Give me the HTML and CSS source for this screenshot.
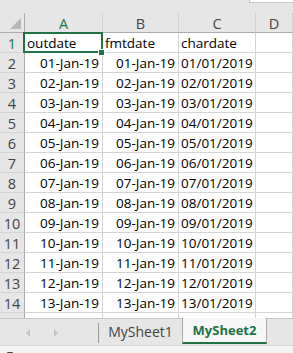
FILE: index.html
```html
<!DOCTYPE html>
<html>
<head>
  <meta charset="UTF-8">
  <title>MySheet2</title>
  <link rel="stylesheet" href="styles.css">
</head>
<body>
  <div class="topband"><div class="fbar"></div></div>

  <div class="sheet">
    <div class="hd corner"></div>
    <div class="hd col active">A</div>
    <div class="hd col">B</div>
    <div class="hd col">C</div>
    <div class="hd col">D</div>

    <div class="hd row active">1</div>
    <div class="c sel">outdate</div>
    <div class="c">fmtdate</div>
    <div class="c">chardate</div>
    <div class="c"></div>
  </div>
  <div class="sheet" id="rows"></div>
  <div class="sheet tail">
    <div class="hd row"></div><div class="c"></div><div class="c"></div><div class="c"></div><div class="c"></div>
  </div>

  <div class="tabbar">
    <div class="nav">
      <span class="arr left"></span>
      <span class="arr right"></span>
    </div>
    <div class="tab">MySheet1</div>
    <div class="tab current">MySheet2</div>
  </div>
  <div class="status">
    <svg width="14" height="6" viewBox="0 0 14 6"><rect x="0" y="2" width="6" height="4" rx="1" fill="#444"/><rect x="7" y="3" width="6" height="3" fill="#444"/></svg>
  </div>

  <script>
    // rows 2..14: one day per row starting 01-Jan-2019
    var rows = document.getElementById('rows');
    var html = '';
    for (var i = 1; i <= 13; i++) {
      var d = (i < 10 ? '0' : '') + i;
      html += '<div class="hd row">' + (i + 1) + '</div>' +
        '<div class="c num">' + d + '-Jan-19</div>' +
        '<div class="c num">' + d + '-Jan-19</div>' +
        '<div class="c">' + d + '/01/2019</div>' +
        '<div class="c"></div>';
    }
    rows.innerHTML = html;
  </script>
</body>
</html>
```

FILE: styles.css
```css
body {
  margin: 0;
  width: 293px;
  height: 353px;
  overflow: hidden;
  background: #e6e6e6;
  font-family: "Open Sans", "Noto Sans", sans-serif;
}
.topband {
  height: 13px;
  background: #e6e6e6;
  position: relative;
}
.fbar {
  position: absolute;
  left: 249px;
  right: 0;
  top: 0;
  height: 2px;
  background: #fff;
  border-left: 1px solid #c6c6c6;
  border-bottom: 1px solid #c6c6c6;
}
.sheet {
  display: grid;
  grid-template-columns: 25px 78px 76px 77px 1fr;
  grid-auto-rows: 20px;
  background: #fff;
}
.hd {
  background: #e6e6e6;
  color: #444;
  font-size: 14.5px;
  display: flex;
  align-items: center;
  justify-content: center;
  box-sizing: border-box;
  border-right: 1px solid #d4d4d4;
  border-bottom: 1px solid #ababab;
}
.hd.row {
  border-right: 1px solid #ababab;
  border-bottom: 1px solid #d4d4d4;
  padding-top: 1px;
}
.hd.col {
  padding-top: 2px;
}
.hd.active {
  color: #217346;
}
.corner {
  position: relative;
  border-right: 1px solid #ababab;
}
.corner::after {
  content: "";
  position: absolute;
  right: 3px;
  bottom: 3px;
  border-left: 11px solid transparent;
  border-bottom: 11px solid #b6b6b6;
}
.c {
  box-sizing: border-box;
  border-right: 1px solid #d4d4d4;
  border-bottom: 1px solid #d4d4d4;
  font-size: 13.5px;
  color: #000;
  padding: 2px 3px 0 2px;
  line-height: 17px;
  white-space: nowrap;
  overflow: hidden;
}
.c.num {
  text-align: right;
}
.c.sel {
  position: relative;
  overflow: visible;
}
.c.sel::before {
  content: "";
  position: absolute;
  left: -2px;
  top: -1px;
  right: -1px;
  bottom: -1px;
  border: 2px solid #217346;
}
.c.sel::after {
  content: "";
  position: absolute;
  right: -3px;
  bottom: -4px;
  width: 5px;
  height: 5px;
  background: #217346;
  border: 1px solid #fff;
  z-index: 2;
}
.tail {
  height: 5px;
  overflow: hidden;
  border-bottom: 1px solid #c6c6c6;
}
.tabbar {
  height: 26px;
  display: flex;
  align-items: stretch;
  background: #e6e6e6;
}
.nav {
  width: 99px;
  display: flex;
  align-items: center;
  padding-left: 26px;
  box-sizing: border-box;
  gap: 24px;
  border-right: 1px solid #9b9b9b;
  margin: 4px 0 2px;
}
.arr {
  width: 0;
  height: 0;
  border-top: 4px solid transparent;
  border-bottom: 4px solid transparent;
}
.arr.left {
  border-right: 4px solid #c3c3c3;
}
.arr.right {
  border-left: 4px solid #c3c3c3;
}
.tab {
  width: 83px;
  display: flex;
  align-items: center;
  justify-content: center;
  font-size: 14px;
  color: #444;
  padding-bottom: 2px;
}
.tab.current {
  background: #f7f7f7;
  color: #217346;
  font-size: 13px;
  font-weight: bold;
  border-left: 1px solid #ababab;
  border-right: 1px solid #ababab;
  border-bottom: 2px solid #217346;
  margin-top: -1px;
  margin-bottom: 1px;
  padding-bottom: 0;
}
.status {
  height: 10px;
  background: #f3f3f3;
  border-top: 1px solid #d4d4d4;
  padding-left: 7px;
  padding-top: 4px;
  box-sizing: border-box;
}
.status svg {
  display: block;
}
```
